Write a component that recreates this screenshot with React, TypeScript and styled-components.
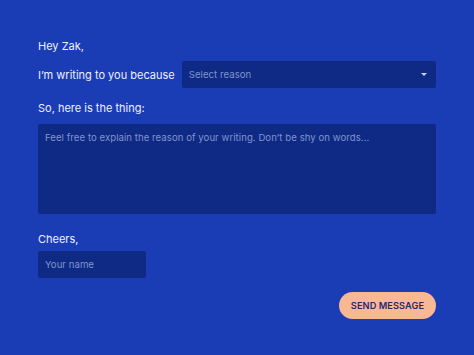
import React from "react";
import styled, { createGlobalStyle } from "styled-components";

const FONT = `Inter, "Noto Sans", sans-serif`;

const Global = createGlobalStyle`
  html, body { margin: 0; padding: 0; background: #1a3cb4; }
  body { font-family: ${FONT}; }
  * { box-sizing: border-box; }
`;

const Page = styled.div`
  width: 474px;
  height: 355px;
  background: #1a3cb4;
  padding: 37px 38px 0 38px;
  display: flex;
  flex-direction: column;
  color: #eef1ff;
`;

const Label = styled.div<{ $mt?: number }>`
  font-size: 11px;
  line-height: 18px;
  margin-top: ${(p) => p.$mt ?? 0}px;
  letter-spacing: 0;
`;

const Row = styled.div`
  display: flex;
  align-items: center;
  gap: 7px;
  margin-top: 6px;
`;

const field = `
  background: #0f2a85;
  border: none;
  border-radius: 2px;
  color: #8093d0;
  font-family: ${FONT};
  font-size: 9.6px;
  letter-spacing: 0.05px;
`;

const Select = styled.div`
  ${field}
  flex: 1;
  height: 27px;
  display: flex;
  align-items: center;
  justify-content: space-between;
  padding: 0 9px 0 7px;
`;

const Caret = styled.span`
  width: 0;
  height: 0;
  border-left: 3px solid transparent;
  border-right: 3px solid transparent;
  border-top: 3px solid #c9d3f5;
`;

const TextArea = styled.div`
  ${field}
  height: 90px;
  margin-top: 7px;
  padding: 7px 7px;
  line-height: 14px;
`;

const NameInput = styled.div`
  ${field}
  width: 108px;
  height: 27px;
  margin-top: 3px;
  display: flex;
  align-items: center;
  padding: 0 7px;
`;

const Footer = styled.div`
  display: flex;
  justify-content: flex-end;
  margin-top: 14px;
`;

const Button = styled.button`
  background: #f9b894;
  color: #1d2a6b;
  border: none;
  border-radius: 14px;
  height: 27px;
  width: 97px;
  font-family: ${FONT};
  font-weight: 600;
  font-size: 9.2px;
  letter-spacing: 0.1px;
  padding: 0;
`;

export default function App() {
  return (
    <>
      <Global />
      <Page>
        <Label>Hey Zak,</Label>
        <Row>
          <Label>I’m writing to you because</Label>
          <Select>
            <span>Select reason</span>
            <Caret />
          </Select>
        </Row>
        <Label $mt={11}>So, here is the thing:</Label>
        <TextArea>Feel free to explain the reason of your writing. Don’t be shy on words...</TextArea>
        <Label $mt={16}>Cheers,</Label>
        <NameInput>Your name</NameInput>
        <Footer>
          <Button>SEND MESSAGE</Button>
        </Footer>
      </Page>
    </>
  );
}
